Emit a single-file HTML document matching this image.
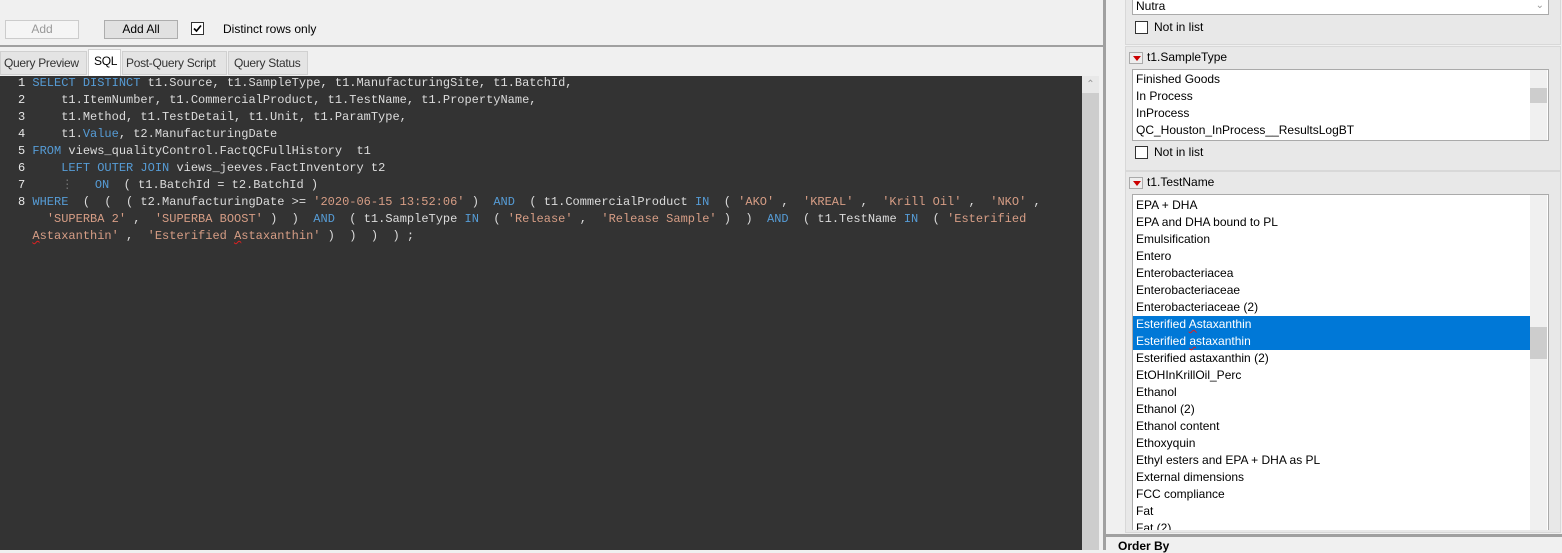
<!DOCTYPE html><html><head><style>
*{margin:0;padding:0;box-sizing:border-box}
body{width:1562px;height:550px;overflow:hidden;background:#f0f0f0;font-family:"Liberation Sans",sans-serif;font-size:12px;color:#000;position:relative}
.a{position:absolute}
.btn{border:1px solid #adadad;background:#e1e1e1;text-align:center;line-height:17px;font-size:12px}
pre{font-family:"Liberation Mono",monospace;font-size:12px;line-height:17px;color:#dcdcdc}
.k{color:#569cd6}.s{color:#d69d85}.n{color:#e8e8e8}
.u{text-decoration:underline wavy #e02020;text-decoration-thickness:1px}
.tab{position:absolute;top:51px;height:24px;background:#e4e4e4;border:1px solid #d0d0d0;line-height:22px;padding:0 3px;color:#333;white-space:nowrap;overflow:hidden;font-size:12px;letter-spacing:-0.3px}
.row{height:17px;line-height:17px;padding-left:3px;white-space:nowrap}
.sel{background:#0078d7;color:#fff}
.cb{position:absolute;width:13px;height:13px;border:1px solid #333;background:#fff}
.tri{position:absolute;width:14px;height:12px;border:1px solid #aaa;background:#eee}
.tri:after{content:"";position:absolute;left:3px;top:3px;border-left:4px solid transparent;border-right:4px solid transparent;border-top:5px solid #c00}
</style></head><body>
<div class="btn a" style="left:5px;top:20px;width:74px;height:19px;color:#999;background:#f5f5f5;border-color:#ccc">Add</div>
<div class="btn a" style="left:104px;top:20px;width:74px;height:19px">Add All</div>
<div class="cb" style="left:191px;top:22px;border-color:#333"><svg width="11" height="11" style="position:absolute;left:0;top:0"><path d="M2 5.5L4.5 8L9 2.5" stroke="#000" stroke-width="1.6" fill="none"/></svg></div>
<div class="a" style="left:223px;top:22px">Distinct rows only</div>
<div class="a" style="left:0;top:45px;width:1103px;height:2px;background:#a0a0a0"></div>
<div class="tab" style="left:0;width:87px">Query Preview</div>
<div class="tab" style="left:88px;top:49px;height:27px;background:#fff;border-bottom:none;color:#000;width:33px;padding:0 5px">SQL</div>
<div class="tab" style="left:122px;width:105px">Post-Query Script</div>
<div class="tab" style="left:228px;width:80px;padding:0 5px">Query Status</div>
<div class="a" style="left:0;top:76px;width:1082px;height:474px;background:#333"></div>
<div class="a" style="left:1082px;top:76px;width:17px;height:474px;background:#cdcdcd"></div>
<div class="a" style="left:1082px;top:76px;width:17px;height:17px;background:#e8e8e8;color:#999;font-size:10px;text-align:center;line-height:17px">&#8963;</div>
<div class="a" style="left:1103px;top:0;width:3px;height:550px;background:#a0a0a0"></div>
<pre class="a" style="left:18px;top:75px"><span class="n">1</span> <span class="k">SELECT DISTINCT</span> t1.Source, t1.SampleType, t1.ManufacturingSite, t1.BatchId,
<span class="n">2</span>     t1.ItemNumber, t1.CommercialProduct, t1.TestName, t1.PropertyName,
<span class="n">3</span>     t1.Method, t1.TestDetail, t1.Unit, t1.ParamType,
<span class="n">4</span>     t1.<span class="k">Value</span>, t2.ManufacturingDate
<span class="n">5</span> <span class="k">FROM</span> views_qualityControl.FactQCFullHistory  t1
<span class="n">6</span>     <span class="k">LEFT OUTER JOIN</span> views_jeeves.FactInventory t2
<span class="n">7</span>     <span style="color:#777">&#8942;</span>   <span class="k">ON</span>  ( t1.BatchId = t2.BatchId )
<span class="n">8</span> <span class="k">WHERE</span>  (  (  ( t2.ManufacturingDate &gt;= <span class="s">'2020-06-15 13:52:06'</span> )  <span class="k">AND</span>  ( t1.CommercialProduct <span class="k">IN</span>  ( <span class="s">'AKO'</span> ,  <span class="s">'KREAL'</span> ,  <span class="s">'Krill Oil'</span> ,  <span class="s">'NKO'</span> ,
    <span class="s">'SUPERBA 2'</span> ,  <span class="s">'SUPERBA BOOST'</span> )  )  <span class="k">AND</span>  ( t1.SampleType <span class="k">IN</span>  ( <span class="s">'Release'</span> ,  <span class="s">'Release Sample'</span> )  )  <span class="k">AND</span>  ( t1.TestName <span class="k">IN</span>  ( <span class="s">'Esterified</span>
  <span class="s"><span class="u">A</span>staxanthin'</span> ,  <span class="s">'Esterified <span class="u">A</span>staxanthin'</span> )  )  )  ) ;</pre>
<!-- right panel -->
<div class="a" style="left:1106px;top:0;width:456px;height:550px;background:#f0f0f0"></div>
<div class="a" style="left:1125px;top:-2px;width:436px;height:47px;border:1px solid #d8d8d8;background:#e8e8e8"></div>
<div class="a" style="left:1132px;top:-4px;width:417px;height:19px;border:1px solid #aaa;background:#fff;padding-left:3px;line-height:18px">Nutra<span style="position:absolute;right:4px;color:#999;font-size:10px">&#8964;</span></div>
<div class="cb" style="left:1135px;top:21px"></div><div class="a" style="left:1154px;top:20px">Not in list</div>
<div class="a" style="left:1125px;top:46px;width:436px;height:125px;border:1px solid #d8d8d8;background:#e8e8e8"></div>
<div class="tri" style="left:1129px;top:52px"></div><div class="a" style="left:1147px;top:50px">t1.SampleType</div>
<div class="a" style="left:1132px;top:69px;width:417px;height:72px;border:1px solid #aaa;background:#fff;padding-top:1px">
<div class="row">Finished Goods</div><div class="row">In Process</div><div class="row">InProcess</div><div class="row">QC_Houston_InProcess__ResultsLogBT</div>
<div class="a" style="left:397px;top:0;width:17px;height:70px;background:#f0f0f0"><div class="a" style="top:18px;width:17px;height:15px;background:#cdcdcd"></div></div></div>
<div class="cb" style="left:1135px;top:146px"></div><div class="a" style="left:1154px;top:145px">Not in list</div>
<div class="a" style="left:1125px;top:171px;width:436px;height:362px;border:1px solid #d8d8d8;background:#e8e8e8"></div>
<div class="tri" style="left:1129px;top:177px"></div><div class="a" style="left:1147px;top:175px">t1.TestName</div>
<div class="a" style="left:1132px;top:194px;width:417px;height:336px;border:1px solid #aaa;border-bottom:none;background:#fff;overflow:hidden;padding-top:2px">
<div class="row">EPA + DHA</div><div class="row">EPA and DHA bound to PL</div><div class="row">Emulsification</div><div class="row">Entero</div><div class="row">Enterobacteriacea</div><div class="row">Enterobacteriaceae</div><div class="row">Enterobacteriaceae (2)</div>
<div class="row sel" style="width:397px">Esterified <span class="u">A</span>staxanthin</div><div class="row sel" style="width:397px">Esterified <span class="u">a</span>staxanthin</div>
<div class="row">Esterified astaxanthin (2)</div><div class="row">EtOHInKrillOil_Perc</div><div class="row">Ethanol</div><div class="row">Ethanol (2)</div><div class="row">Ethanol content</div><div class="row">Ethoxyquin</div><div class="row">Ethyl esters and EPA + DHA as PL</div><div class="row">External dimensions</div><div class="row">FCC compliance</div><div class="row">Fat</div><div class="row">Fat (2)</div>
<div class="a" style="left:397px;top:0;width:17px;height:336px;background:#f0f0f0"><div class="a" style="top:132px;width:17px;height:32px;background:#cdcdcd"></div></div></div>
<div class="a" style="left:1106px;top:534px;width:456px;height:3px;background:#a0a0a0"></div>
<div class="a" style="left:1118px;top:539px;font-weight:bold;font-size:12px">Order By</div>
</body></html>
